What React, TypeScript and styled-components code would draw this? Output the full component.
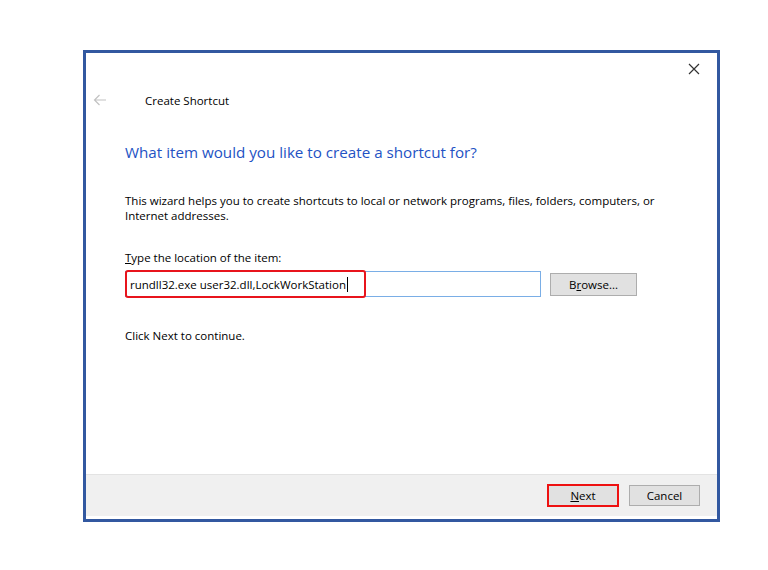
import React from 'react';
import styled, { createGlobalStyle } from 'styled-components';

const GlobalStyle = createGlobalStyle`
  html, body {
    margin: 0;
    padding: 0;
    background: #ffffff;
  }
  body {
    font-family: 'Open Sans', 'Noto Sans', sans-serif;
    color: #000000;
  }
`;

const BackArrow = () => (
  <svg width="14" height="12" viewBox="0 0 14 12" fill="none">
    <path d="M13 6H1.5M6.5 1L1.5 6l5 5" stroke="#c2c2c2" strokeWidth="1.2" />
  </svg>
);

const CloseIcon = () => (
  <svg width="12" height="12" viewBox="0 0 12 12" fill="none">
    <path d="M1 1l10 10M11 1L1 11" stroke="#333333" strokeWidth="1.2" />
  </svg>
);

export default function App() {
  return (
    <>
      <GlobalStyle />
      <Page>
        <Dialog>
          <CloseRow>
            <CloseButton aria-label="Close">
              <CloseIcon />
            </CloseButton>
          </CloseRow>

          <HeaderRow>
            <BackButton aria-label="Back">
              <BackArrow />
            </BackButton>
            <WizardTitle>Create Shortcut</WizardTitle>
          </HeaderRow>

          <Body>
            <Heading>What item would you like to create a shortcut for?</Heading>
            <Description>
              This wizard helps you to create shortcuts to local or network programs, files, folders, computers, or
              <br />
              Internet addresses.
            </Description>

            <FieldLabel>
              <u>T</u>ype the location of the item:
            </FieldLabel>
            <InputRow>
              <InputWrap>
                <LocationInput>
                  rundll32.exe user32.dll,LockWorkStation
                  <Caret />
                </LocationInput>
                <Highlight />
              </InputWrap>
              <DialogButton $width={87} $height={23}>
                B<u>r</u>owse...
              </DialogButton>
            </InputRow>

            <Hint>Click Next to continue.</Hint>
          </Body>

          <Footer>
            <DialogButton $width={70} $height={21} $focused>
              <u>N</u>ext
            </DialogButton>
            <DialogButton $width={71} $height={21}>
              Cancel
            </DialogButton>
          </Footer>
        </Dialog>
      </Page>
    </>
  );
}

const Page = styled.div`
  width: 768px;
  height: 570px;
  padding: 50px 0 0 83px;
  box-sizing: border-box;
`;

const Dialog = styled.div`
  width: 637px;
  height: 472px;
  box-sizing: border-box;
  border: 3px solid #3258a0;
  background: #ffffff;
  display: flex;
  flex-direction: column;
`;

const CloseRow = styled.div`
  height: 32px;
  display: flex;
  justify-content: flex-end;
  align-items: center;
  padding-right: 17px;
`;

const CloseButton = styled.div`
  width: 12px;
  height: 12px;
  display: flex;
`;

const HeaderRow = styled.div`
  height: 24px;
  margin-top: 3px;
  display: flex;
  align-items: center;
  padding-left: 7px;
`;

const BackButton = styled.div`
  width: 14px;
  height: 12px;
  display: flex;
  margin-right: 38px;
`;

const WizardTitle = styled.span`
  font-size: 11.5px;
  color: #000000;
`;

const Body = styled.div`
  padding-left: 39px;
  display: flex;
  flex-direction: column;
`;

const Heading = styled.h1`
  margin: 30px 0 0;
  font-size: 15.2px;
  line-height: 20px;
  font-weight: 400;
  color: #2352c4;
`;

const Description = styled.p`
  margin: 31px 0 0;
  font-size: 11.5px;
  line-height: 15px;
`;

const FieldLabel = styled.div`
  margin-top: 27px;
  font-size: 11.5px;
  line-height: 15px;

  u {
    text-decoration: underline;
  }
`;

const InputRow = styled.div`
  margin-top: 6px;
  display: flex;
  align-items: center;
  gap: 9px;
`;

const InputWrap = styled.div`
  position: relative;
`;

const LocationInput = styled.div`
  width: 416px;
  height: 26px;
  box-sizing: border-box;
  border: 1px solid #7aaee6;
  padding-left: 4px;
  display: flex;
  align-items: center;
  font-size: 11.5px;
  white-space: nowrap;
`;

const Caret = styled.span`
  display: inline-block;
  width: 1px;
  height: 15px;
  background: #000000;
  margin-left: 1px;
`;

const Highlight = styled.div`
  position: absolute;
  left: 0;
  top: -1px;
  width: 241px;
  height: 28px;
  box-sizing: border-box;
  border: 2px solid #e8141c;
  border-radius: 3px;
  pointer-events: none;
`;

const DialogButton = styled.div<{ $width: number; $height: number; $focused?: boolean }>`
  width: ${p => p.$width}px;
  height: ${p => p.$height}px;
  box-sizing: border-box;
  background: #e1e1e1;
  border: 1px solid ${p => (p.$focused ? '#0078d7' : '#adadad')};
  outline: ${p => (p.$focused ? '2px solid #ee1111' : 'none')};
  outline-offset: -1px;
  display: flex;
  align-items: center;
  justify-content: center;
  font-size: 11.5px;
  color: #000000;
`;

const Hint = styled.div`
  margin-top: 31px;
  font-size: 11.5px;
  line-height: 15px;
`;

const Footer = styled.div`
  margin-top: auto;
  margin-bottom: 3px;
  height: 42px;
  box-sizing: border-box;
  background: #f0f0f0;
  border-top: 1px solid #e3e3e3;
  display: flex;
  justify-content: flex-end;
  align-items: center;
  gap: 11px;
  padding-right: 17px;
`;
